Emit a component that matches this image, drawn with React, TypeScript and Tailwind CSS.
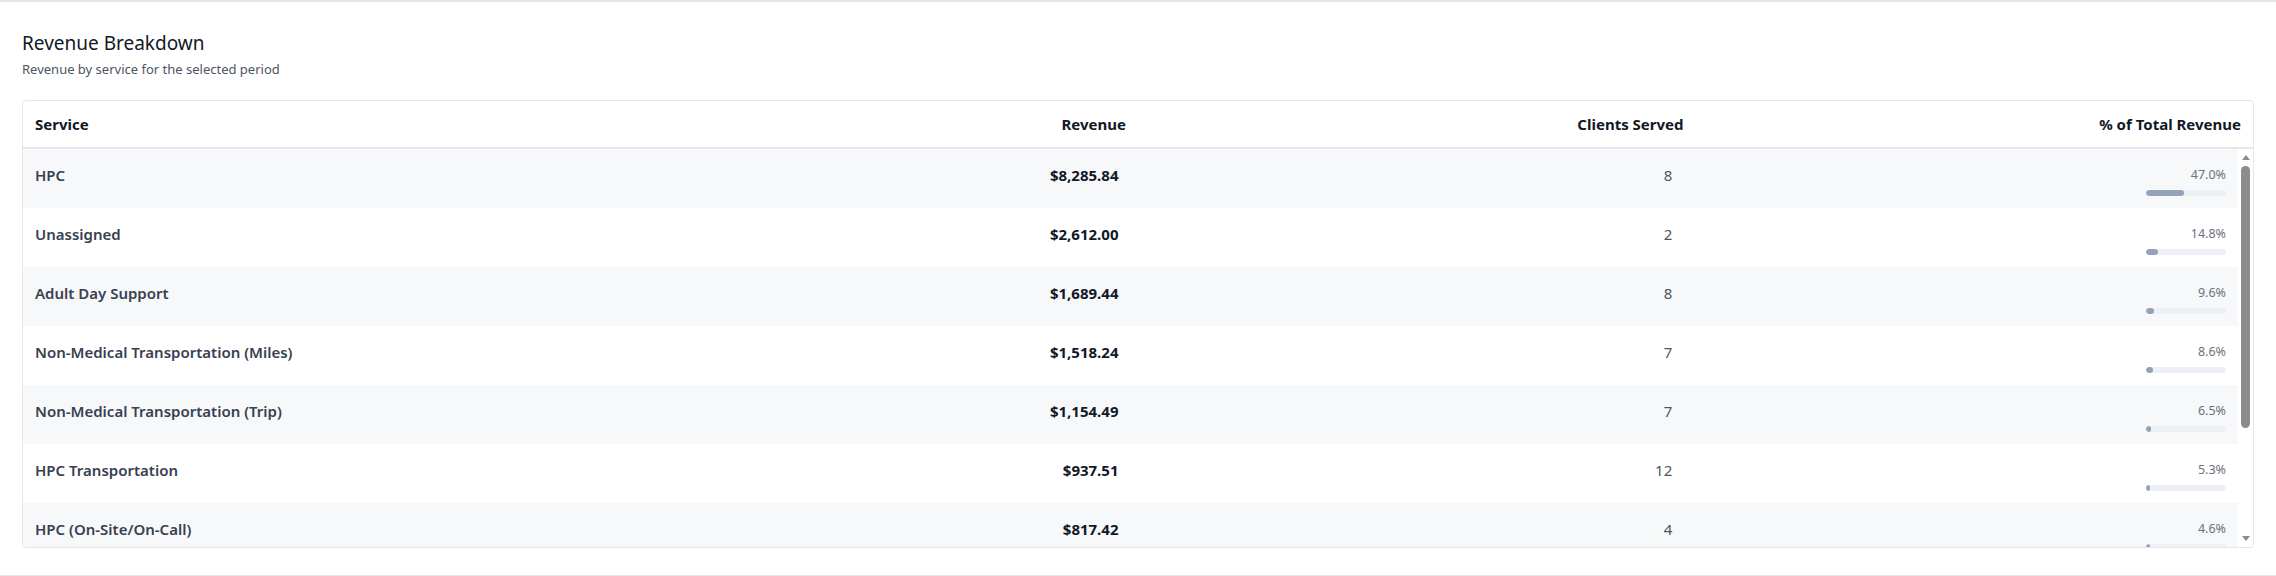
import React from "react";

const rows = [
  { s: "HPC", r: "$8,285.84", c: 8, p: 47.0 },
  { s: "Unassigned", r: "$2,612.00", c: 2, p: 14.8 },
  { s: "Adult Day Support", r: "$1,689.44", c: 8, p: 9.6 },
  { s: "Non-Medical Transportation (Miles)", r: "$1,518.24", c: 7, p: 8.6 },
  { s: "Non-Medical Transportation (Trip)", r: "$1,154.49", c: 7, p: 6.5 },
  { s: "HPC Transportation", r: "$937.51", c: 12, p: 5.3 },
  { s: "HPC (On-Site/On-Call)", r: "$817.42", c: 4, p: 4.6 },
];

const cols = "grid grid-cols-[35%_15%_25%_25%]";

export default function App() {
  return (
    <div className="w-[2276px] h-[576px] bg-white text-[#1f2937]" style={{ fontFamily: '"Noto Sans", "Open Sans", sans-serif' }}>
      <div className="border-t-2 border-b border-[#e5e7eb] h-[576px] px-[22px] pt-[28px]">
        <h2 className="text-[19px] leading-[26px] text-[#111827]">Revenue Breakdown</h2>
        <p className="text-[13px] leading-[18px] text-[#4b5563] mt-[4px]">Revenue by service for the selected period</p>
        <div className="mt-[22px] border border-[#e5e7eb] rounded-[4px] overflow-hidden">
          <div className={`${cols} h-[48px] items-center border-b-2 border-[#e5e7eb] text-[15px] font-bold text-[#111827]`}>
            <div className="pl-[12px]">Service</div>
            <div className="text-right pr-[12px]">Revenue</div>
            <div className="text-right pr-[12px]">Clients Served</div>
            <div className="text-right pr-[12px]">% of Total Revenue</div>
          </div>
          <div className="flex h-[398px]">
            <div className="flex-1 overflow-hidden">
              {rows.map((row, i) => (
                <div key={i} className={`${cols} h-[59px] ${i % 2 === 0 ? "bg-[#f7f8fa]" : "bg-white"}`}>
                  <div className="pl-[12px] pt-[16px] text-[15px] leading-[20px] font-semibold text-[#374151]">{row.s}</div>
                  <div className="text-right pr-[12px] pt-[16px] text-[15px] leading-[20px] font-bold text-[#111827]">{row.r}</div>
                  <div className="text-right pr-[12px] pt-[16px] text-[15px] leading-[20px] text-[#4b5563]">{row.c}</div>
                  <div className="flex flex-col items-end pr-[12px] pt-[18px]">
                    <div className="text-[12.5px] leading-[16px] text-[#6b7280]">{row.p.toFixed(1)}%</div>
                    <div className="mt-[7px] w-[80px] h-[6px] rounded-full bg-[#edf0f5] overflow-hidden">
                      <div className="h-full rounded-full bg-[#94a3b8]" style={{ width: `${Math.max(row.p, 3)}%` }} />
                    </div>
                  </div>
                </div>
              ))}
            </div>
            <div className="w-[15px] bg-white flex flex-col items-center">
              <svg width="10" height="8" viewBox="0 0 10 8" className="mt-[5px]"><path d="M1 6 L5 1 L9 6 Z" fill="#8c8c8c" /></svg>
              <div className="mt-[4px] w-[9px] h-[262px] rounded-full bg-[#8c8c8c]" />
              <div className="flex-1" />
              <svg width="10" height="8" viewBox="0 0 10 8" className="mb-[5px]"><path d="M1 2 L9 2 L5 7 Z" fill="#8c8c8c" /></svg>
            </div>
          </div>
        </div>
      </div>
    </div>
  );
}
